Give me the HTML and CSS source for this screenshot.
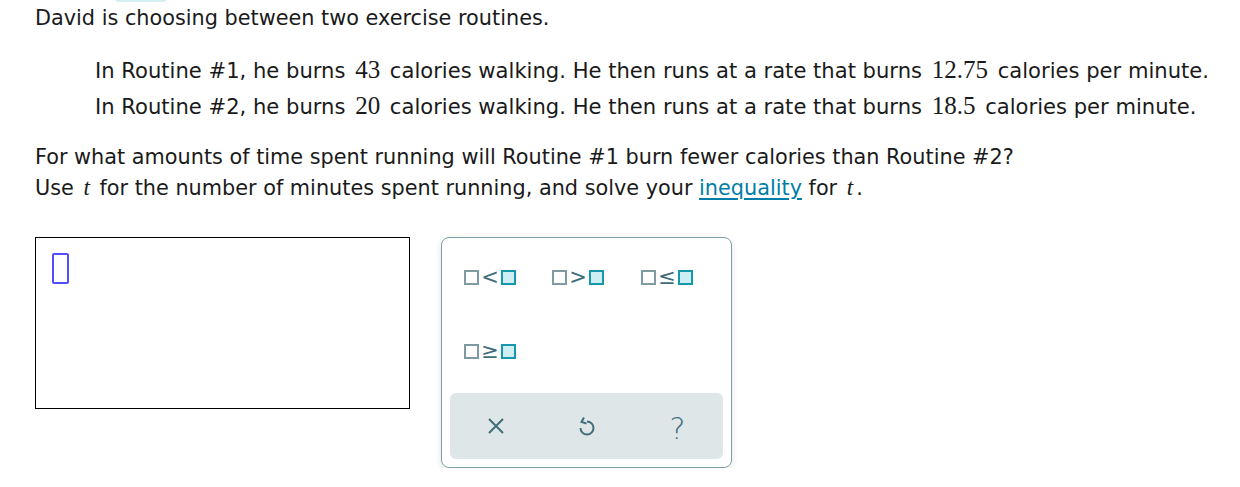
FILE: index.html
```html
<!DOCTYPE html>
<html>
<head>
<meta charset="utf-8">
<link rel="stylesheet" href="styles.css">
</head>
<body>
<div class="tab-hint"></div>
<div class="question">
  <p class="intro">David is choosing between two exercise routines.</p>
  <div class="routines">
    <p>In Routine #1, he burns <span class="num">43</span> calories walking. He then runs at a rate that burns <span class="num">12.75</span> calories per minute.</p>
    <p>In Routine #2, he burns <span class="num">20</span> calories walking. He then runs at a rate that burns <span class="num">18.5</span> calories per minute.</p>
  </div>
  <p class="ask">For what amounts of time spent running will Routine #1 burn fewer calories than Routine #2?<br>Use <i class="var">t</i> for the number of minutes spent running, and solve your <a class="link" href="#">inequality</a> for <i class="var">t</i>.</p>
</div>
<div class="work">
  <div class="answer"><span class="cursor"></span></div>
  <div class="panel">
    <div class="keys">
      <button class="key"><span class="box"></span><span class="op">&lt;</span><span class="box hl"></span></button>
      <button class="key"><span class="box"></span><span class="op">&gt;</span><span class="box hl"></span></button>
      <button class="key"><span class="box"></span><span class="op">&le;</span><span class="box hl"></span></button>
      <button class="key"><span class="box"></span><span class="op">&ge;</span><span class="box hl"></span></button>
    </div>
    <div class="tools">
      <button class="tool" aria-label="clear">
        <svg width="18" height="18" viewBox="0 0 18 18"><path d="M2 2 L16 16 M16 2 L2 16" stroke="#3f6d7a" stroke-width="2" fill="none"/></svg>
      </button>
      <button class="tool" aria-label="undo">
        <svg width="20" height="22" viewBox="0 0 20 22"><path d="M10 6.5 A6.5 6.5 0 1 1 3.5 13" stroke="#3f6d7a" stroke-width="2" fill="none"/><path d="M7 2.5 L4.5 7 L9.5 8.5" stroke="#3f6d7a" stroke-width="2" fill="none"/></svg>
      </button>
      <button class="tool q" aria-label="help">?</button>
    </div>
  </div>
</div>
</body>
</html>
```
FILE: styles.css
```css
html, body {
  margin: 0;
  padding: 0;
  background: #fff;
}
body {
  font-family: "DejaVu Sans", Verdana, sans-serif;
  font-size: 20.8px;
  color: #1a1a1a;
  padding: 0 0 0 35px;
  position: relative;
}
.tab-hint {
  position: absolute;
  left: 115px;
  top: -6px;
  width: 52px;
  height: 8px;
  border-radius: 5px;
  background: #d5eef4;
}
p { margin: 0; }
.intro {
  padding-top: 6px;
  line-height: 24px;
}
.routines {
  padding: 23px 0 0 60px;
  font-size: 21.1px;
}
.routines p {
  line-height: 36px;
  height: 36px;
  white-space: nowrap;
}
.num {
  font-family: "Liberation Serif", "Times New Roman", serif;
  font-size: 25px;
  line-height: 20px;
  padding: 0 3px;
}
.ask {
  margin-top: 17px;
  line-height: 31px;
  white-space: nowrap;
}
.var {
  font-family: "Liberation Serif", "Times New Roman", serif;
  font-size: 23px;
  line-height: 20px;
  padding: 0 3px;
}
.link {
  color: #007ea7;
  text-decoration: underline;
  text-underline-offset: 3px;
}
.work {
  display: flex;
  align-items: flex-start;
  gap: 31px;
  margin-top: 33px;
  font-size: 16px;
}
.answer {
  padding: 15px 0 0 16px;
  box-sizing: border-box;
  width: 375px;
  height: 172px;
  border: 1px solid #000;
}
.cursor {
  display: block;
  width: 17px;
  height: 31px;
  border: 2px solid #4f4fff;
  border-radius: 2px;
  box-sizing: border-box;
}
.panel {
  width: 291px;
  height: 231px;
  box-sizing: border-box;
  border: 1px solid #7e9ea7;
  border-radius: 8px;
  box-shadow: 0 2px 6px rgba(0,0,0,0.12);
  padding: 0 8px 8px 8px;
  display: flex;
  flex-direction: column;
}
.keys {
  flex: 1;
  display: grid;
  grid-template-columns: 88px 89px 88px;
  grid-auto-rows: 74px;
  padding: 2px 0 0 14px;
}
.key {
  background: none;
  border: 0;
  padding: 0;
  display: flex;
  align-items: center;
  height: 74px;
  gap: 1px;
  cursor: pointer;
}
.box {
  display: block;
  width: 15px;
  height: 15px;
  box-sizing: border-box;
  border: 2px solid #7f9aa2;
  background: #fff;
}
.box.hl {
  border-color: #1697ad;
  background: #cdeef2;
}
.op {
  font-family: "DejaVu Sans", sans-serif;
  font-size: 21px;
  color: #3f6d7a;
  width: 20px;
  text-align: center;
  line-height: 15px;
}
.tools {
  height: 66px;
  background: #dfe6e8;
  border-radius: 6px;
  display: grid;
  grid-template-columns: 1fr 1fr 1fr;
  align-items: center;
}
.tool {
  background: none;
  border: 0;
  padding: 0;
  display: flex;
  justify-content: center;
  align-items: center;
  height: 66px;
  cursor: pointer;
}
.tool.q {
  font-family: "DejaVu Sans", sans-serif;
  font-size: 30px;
  font-weight: 300;
  color: #3f6d7a;
  padding-top: 4px;
}
```
